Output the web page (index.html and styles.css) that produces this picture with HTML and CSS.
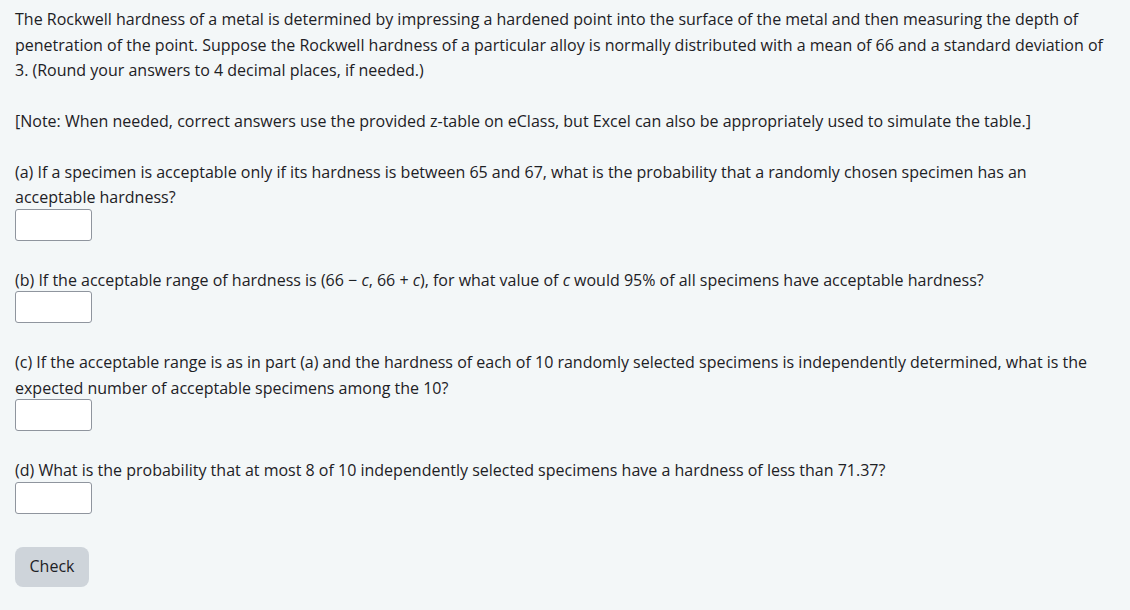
FILE: index.html
```html
<!DOCTYPE html>
<html>
<head>
<meta charset="utf-8">
<link rel="stylesheet" href="styles.css">
</head>
<body>
<div class="question">
  <p class="intro">The Rockwell hardness of a metal is determined by impressing a hardened point into the surface of the metal and then measuring the depth of penetration of the point. Suppose the Rockwell hardness of a particular alloy is normally distributed with a mean of 66 and a standard deviation of 3. (Round your answers to 4 decimal places, if needed.)</p>
  <p class="note">[Note: When needed, correct answers use the provided z-table on eClass, but Excel can also be appropriately used to simulate the table.]</p>
  <div class="part">
    <p class="text">(a) If a specimen is acceptable only if its hardness is between 65 and 67, what is the probability that a randomly chosen specimen has an acceptable hardness?</p>
    <input class="answer" type="text">
  </div>
  <div class="part">
    <p class="text">(b) If the acceptable range of hardness is (66 &minus; <i>c</i>, 66 + <i>c</i>), for what value of <i>c</i> would 95% of all specimens have acceptable hardness?</p>
    <input class="answer" type="text">
  </div>
  <div class="part">
    <p class="text">(c) If the acceptable range is as in part (a) and the hardness of each of 10 randomly selected specimens is independently determined, what is the expected number of acceptable specimens among the 10?</p>
    <input class="answer" type="text">
  </div>
  <div class="part">
    <p class="text">(d) What is the probability that at most 8 of 10 independently selected specimens have a hardness of less than 71.37?</p>
    <input class="answer" type="text">
  </div>
  <button class="check" type="button">Check</button>
</div>
</body>
</html>
```
FILE: styles.css
```css
html, body {
  margin: 0;
  padding: 0;
  background: #f3f7f8;
}
body {
  font-family: "Open Sans", "Noto Sans", sans-serif;
  font-size: 16px;
  line-height: 25.5px;
  color: #1d2125;
}
.question {
  padding: 7px 15px 0 15px;
  width: 1092px;
  display: flex;
  flex-direction: column;
  align-items: flex-start;
}
p {
  margin: 0;
}
.intro {
  margin-bottom: 25px;
}
.note {
  margin-bottom: 25.5px;
}
.part {
  display: flex;
  flex-direction: column;
  align-items: flex-start;
  margin-bottom: 27px;
}
.answer {
  box-sizing: border-box;
  width: 77px;
  height: 32px;
  margin: -2px 0 0 0;
  border: 1px solid #8f959e;
  border-radius: 3px;
  background: #fff;
  padding: 0 6px;
  font: inherit;
}
.part:last-of-type {
  margin-bottom: 33px;
}
.check {
  box-sizing: border-box;
  width: 74px;
  height: 40px;
  border: none;
  border-radius: 8px;
  background: #ced4da;
  color: #1d2125;
  font: inherit;
  padding: 0;
}
```
